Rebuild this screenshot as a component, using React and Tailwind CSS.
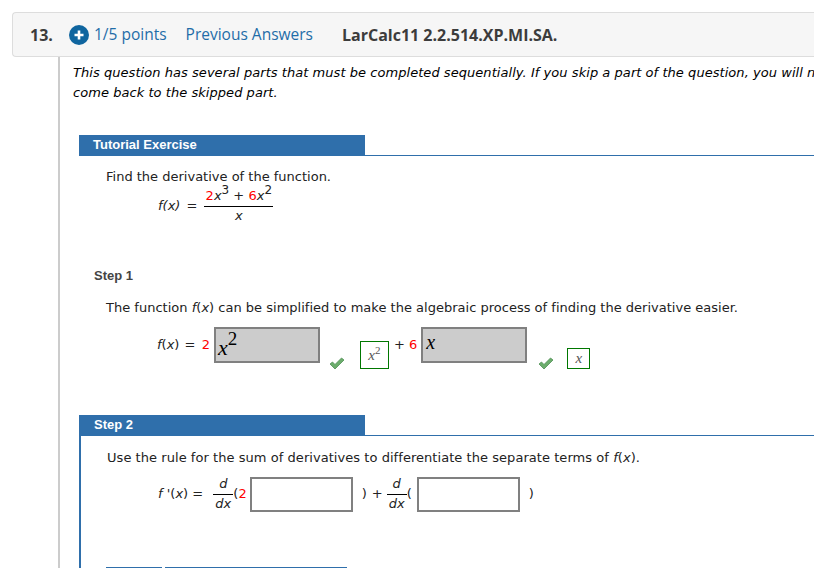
const ui = { fontFamily: '"Open Sans", sans-serif' };

function Check() {
  return (
    <svg width="16" height="13" viewBox="0 0 16 13" className="shrink-0">
      <path d="M1 7 L3.5 5 L6 7.5 L12.5 1 L15 3 L6 12 Z" fill="#6cad6c" stroke="#4f8f55" strokeWidth="0.8" />
    </svg>
  );
}

function AnswerBox({ children }) {
  return (
    <span className="flex h-[36px] w-[106px] shrink-0 items-start border-2 border-[#808080] bg-[#cccccc] pl-[2px] font-['Liberation_Serif',serif] text-black">
      {children}
    </span>
  );
}

function EmptyBox({ className }) {
  return <span className={"block h-[35px] w-[103px] shrink-0 border-2 border-[#808080] bg-white " + className} />;
}

function Frac({ top, bottom, width }) {
  return (
    <span className="inline-flex flex-col items-center">
      <span className="pb-[1px] leading-[18px]">{top}</span>
      <span className={"border-t border-black text-center leading-[18px] " + width}>{bottom}</span>
    </span>
  );
}

export default function App() {
  return (
    <div className="h-[568px] w-[814px] overflow-hidden bg-white font-['DejaVu_Sans',Verdana,sans-serif] text-[13px] text-[#222222]">
      <div className="pl-3 pt-3">
        <div style={ui} className="flex h-[45px] items-center rounded-l-sm border border-r-0 border-[#dddddd] bg-[#f6f6f6] pl-[17px] text-[15.5px]">
          <span className="w-[39px] shrink-0 text-[16px] font-bold text-[#3c3c3c]">13.</span>
          <span className="flex h-[20px] w-[20px] shrink-0 items-center justify-center rounded-full bg-[#0f659f]">
            <svg width="12" height="12" viewBox="0 0 12 12"><path d="M6 1.5v9M1.5 6h9" stroke="#fff" strokeWidth="2.6" /></svg>
          </span>
          <span className="ml-[5px] text-[#1f6da8]">1/5 points</span>
          <span className="ml-[19px] text-[#1f6da8]">Previous Answers</span>
          <span className="ml-[29px] text-[16px] font-bold text-[#3c3c3c]">LarCalc11 2.2.514.XP.MI.SA.</span>
        </div>
      </div>

      <div className="ml-[58px] h-[511px] border-l-2 border-[#cccccc] pl-[13px]">
        <p className="whitespace-nowrap pt-[6px] italic leading-[20px] tracking-[0.05px] text-black">
          This question has several parts that must be completed sequentially. If you skip a part of the question, you will not receive any points for the skipped part, and you will not be able to<br />
          come back to the skipped part.
        </p>

        <div className="ml-[6px] mt-[32px]">
          <div className="border-b border-[#2f6fab]">
            <div style={{ fontFamily: '"Liberation Sans", sans-serif' }} className="h-[20px] w-[286px] bg-[#2f6fab] pl-[14px] text-[13px] font-bold leading-[19px] text-white">Tutorial Exercise</div>
          </div>

          <div className="pl-[27px] pt-[11px]">
            <p className="leading-[20px]">Find the derivative of the function.</p>
            <div className="ml-[52px] flex items-center gap-[6px]">
              <span className="italic">f(x)</span><span className="mr-[1px]">=</span>
              <Frac width="w-[69px]" bottom={<i>x</i>} top={<span><span className="text-[#ff0000]">2</span><i>x</i><sup className="text-[12px]">3</sup> + <span className="text-[#ff0000]">6</span><i>x</i><sup className="text-[12px]">2</sup></span>} />
            </div>
          </div>

          <p className="ml-[15px] mt-[41px] font-['Liberation_Sans',sans-serif] text-[13px] font-bold leading-[20px] text-[#444444]">Step 1</p>
          <p className="ml-[27px] mt-[12px] leading-[20px] tracking-[0.01px]">The function <i>f</i>(<i>x</i>) can be simplified to make the algebraic process of finding the derivative easier.</p>

          <div className="ml-[78px] mt-[9px] flex items-start">
            <span className="mt-[8px]"><i>f</i>(<i>x</i>) <span className="ml-[1px]">=</span> <span className="ml-[2px] text-[#ff0000]">2</span></span>
            <span className="ml-[4px]">
              <AnswerBox>
                <i className="mt-[6px] text-[22px] leading-[26px]">x</i>
                <span className="text-[19px] leading-[20px]">2</span>
              </AnswerBox>
            </span>
            <span className="ml-[9px] mt-[30px]"><Check /></span>
            <span className="ml-[15px] mt-[14px] flex h-[28px] w-[29px] items-center justify-center border border-[#007700] font-['Liberation_Serif',serif] text-[#555555]">
              <i className="text-[15px]">x</i><sup className="text-[11px]">2</sup>
            </span>
            <span className="ml-[5px] mt-[8px]">+ <span className="text-[#ff0000]">6</span></span>
            <span className="ml-[4px]">
              <AnswerBox><i className="ml-[1px] text-[20px] leading-[26px]">x</i></AnswerBox>
            </span>
            <span className="ml-[11px] mt-[30px]"><Check /></span>
            <span className="ml-[13px] mt-[21px] flex h-[21px] w-[23px] items-center justify-center border border-[#007700] font-['Liberation_Serif',serif] text-[#555555]">
              <i className="text-[15px]">x</i>
            </span>
          </div>

          <div className="mt-[45px] border-l-2 border-[#2f6fab]">
            <div className="border-b border-[#2f6fab]">
              <div className="-ml-[2px] h-[20px] w-[286px] bg-[#2f6fab] pl-[15px] font-['Liberation_Sans',sans-serif] text-[13px] font-bold leading-[19px] text-white">Step 2</div>
            </div>
            <p className="ml-[26px] mt-[12px] leading-[20px] tracking-[0.05px]">Use the rule for the sum of derivatives to differentiate the separate terms of <i>f</i>(<i>x</i>).</p>
            <div className="ml-[77px] mt-[7px] flex items-center">
              <span className="italic">f '</span><span className="mr-[6px]">(<i>x</i>) =&nbsp;</span>
              <Frac width="w-[20px]" top={<i>d</i>} bottom={<i>dx</i>} />
              <span>(<span className="text-[#ff0000]">2</span></span>
              <EmptyBox className="ml-[3px]" />
              <span className="ml-[9px]">)</span>
              <span className="ml-[5px] mr-[4px]">+</span>
              <Frac width="w-[20px]" top={<i>d</i>} bottom={<i>dx</i>} />
              <span>(</span>
              <EmptyBox className="ml-[5px]" />
              <span className="ml-[9px]">)</span>
            </div>
            <div className="ml-[25px] mt-[54px] flex gap-[3px]">
              <span className="block h-[20px] w-[56px] border-2 border-[#2f6fab]" />
              <span className="block h-[20px] w-[182px] border-2 border-[#2f6fab]" />
            </div>
          </div>
        </div>
      </div>
    </div>
  );
}
